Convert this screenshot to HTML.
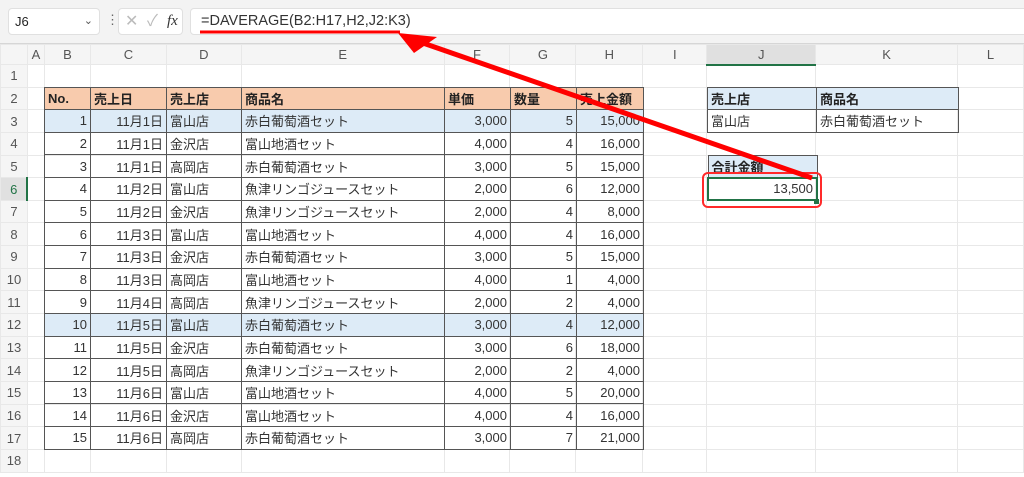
<!DOCTYPE html>
<html><head><meta charset="utf-8"><style>
*{box-sizing:border-box;margin:0;padding:0}
body{width:1024px;height:477px;overflow:hidden;background:#fff;font-family:"Liberation Sans","Noto Sans CJK JP",sans-serif;position:relative;color:#222}
.fb{position:absolute;left:0;top:0;width:1024px;height:44px;background:#f3f3f3;border-bottom:1px solid #d6d6d6}
.nb{position:absolute;left:8px;top:8px;width:92px;height:27px;background:#fff;border:1px solid #e0e0e0;border-radius:4px;font-size:13px;line-height:25px;padding-left:6px}
.ib{position:absolute;left:118px;top:8px;width:65px;height:27px;background:#fff;border:1px solid #e0e0e0;border-radius:4px;font-size:16px;color:#bbb;line-height:25px}
.fx{position:absolute;left:190px;top:8px;width:840px;height:27px;background:#fff;border:1px solid #e0e0e0;border-radius:4px;font-size:14.5px;line-height:25px;padding-left:10px;color:#333}
table{border-collapse:collapse;table-layout:fixed;position:absolute}
.g{left:0;top:44px}
.g td{border:1px solid #e8e8e8;height:22.65px;font-size:13px;color:#555}
.g tr.h td{height:20px;background:#f5f5f5;text-align:center;color:#555}
.g td.r{background:#f5f5f5;text-align:center;color:#555;font-size:13px}
.d td{border:1px solid #555;height:22.65px;font-size:13px;padding:0 3px;white-space:nowrap;overflow:hidden;color:#333}
.d td.n{text-align:right}
.d tr.hd td{background:#f8cbad;font-weight:bold;color:#222}
.d tr.hl td{background:#ddebf7}
.b td.bh{background:#ddebf7;font-weight:bold;color:#222}
</style></head><body>
<div class="fb">
<div class="nb">J6<span style="position:absolute;right:6px;top:0;color:#555;font-size:11px">&#8964;</span></div>
<div style="position:absolute;left:106px;top:12px;color:#666;font-size:13px">&#8942;</div>
<div class="ib"><span style="position:absolute;left:6px">&#10005;</span><span style="position:absolute;left:28px">&#10003;</span><span style="position:absolute;left:48px;color:#333;font-family:'Liberation Serif',serif;font-style:italic;font-size:15px">fx</span></div>
<div class="fx">=DAVERAGE(B2:H17,H2,J2:K3)</div>
</div>
<table class="g">
<colgroup><col style="width:27px"><col style="width:17px"><col style="width:46px"><col style="width:76px"><col style="width:75px"><col style="width:203px"><col style="width:66px"><col style="width:66px"><col style="width:67px"><col style="width:64px"><col style="width:109px"><col style="width:142px"><col style="width:66px"></colgroup>
<tr class="h"><td></td><td>A</td><td>B</td><td>C</td><td>D</td><td>E</td><td>F</td><td>G</td><td>H</td><td>I</td><td style="background:#e0e0e0;border-bottom:2px solid #217346">J</td><td>K</td><td>L</td></tr>
<tr><td class="r">1</td><td></td><td></td><td></td><td></td><td></td><td></td><td></td><td></td><td></td><td></td><td></td><td></td></tr>
<tr><td class="r">2</td><td></td><td></td><td></td><td></td><td></td><td></td><td></td><td></td><td></td><td></td><td></td><td></td></tr>
<tr><td class="r">3</td><td></td><td></td><td></td><td></td><td></td><td></td><td></td><td></td><td></td><td></td><td></td><td></td></tr>
<tr><td class="r">4</td><td></td><td></td><td></td><td></td><td></td><td></td><td></td><td></td><td></td><td></td><td></td><td></td></tr>
<tr><td class="r">5</td><td></td><td></td><td></td><td></td><td></td><td></td><td></td><td></td><td></td><td></td><td></td><td></td></tr>
<tr><td class="r" style="background:#e0e0e0;border-right:2px solid #217346;color:#217346">6</td><td></td><td></td><td></td><td></td><td></td><td></td><td></td><td></td><td></td><td></td><td></td><td></td></tr>
<tr><td class="r">7</td><td></td><td></td><td></td><td></td><td></td><td></td><td></td><td></td><td></td><td></td><td></td><td></td></tr>
<tr><td class="r">8</td><td></td><td></td><td></td><td></td><td></td><td></td><td></td><td></td><td></td><td></td><td></td><td></td></tr>
<tr><td class="r">9</td><td></td><td></td><td></td><td></td><td></td><td></td><td></td><td></td><td></td><td></td><td></td><td></td></tr>
<tr><td class="r">10</td><td></td><td></td><td></td><td></td><td></td><td></td><td></td><td></td><td></td><td></td><td></td><td></td></tr>
<tr><td class="r">11</td><td></td><td></td><td></td><td></td><td></td><td></td><td></td><td></td><td></td><td></td><td></td><td></td></tr>
<tr><td class="r">12</td><td></td><td></td><td></td><td></td><td></td><td></td><td></td><td></td><td></td><td></td><td></td><td></td></tr>
<tr><td class="r">13</td><td></td><td></td><td></td><td></td><td></td><td></td><td></td><td></td><td></td><td></td><td></td><td></td></tr>
<tr><td class="r">14</td><td></td><td></td><td></td><td></td><td></td><td></td><td></td><td></td><td></td><td></td><td></td><td></td></tr>
<tr><td class="r">15</td><td></td><td></td><td></td><td></td><td></td><td></td><td></td><td></td><td></td><td></td><td></td><td></td></tr>
<tr><td class="r">16</td><td></td><td></td><td></td><td></td><td></td><td></td><td></td><td></td><td></td><td></td><td></td><td></td></tr>
<tr><td class="r">17</td><td></td><td></td><td></td><td></td><td></td><td></td><td></td><td></td><td></td><td></td><td></td><td></td></tr>
<tr><td class="r">18</td><td></td><td></td><td></td><td></td><td></td><td></td><td></td><td></td><td></td><td></td><td></td><td></td></tr>
</table>

<table class="d" style="left:44px;top:86.5px">
<colgroup><col style="width:46px"><col style="width:76px"><col style="width:75px"><col style="width:203px"><col style="width:66px"><col style="width:66px"><col style="width:67px"></colgroup>
<tr class="hd"><td>No.</td><td>売上日</td><td>売上店</td><td>商品名</td><td>単価</td><td>数量</td><td>売上金額</td></tr>
<tr class="hl"><td class="n">1</td><td class="n">11月1日</td><td>富山店</td><td>赤白葡萄酒セット</td><td class="n">3,000</td><td class="n">5</td><td class="n">15,000</td></tr>
<tr><td class="n">2</td><td class="n">11月1日</td><td>金沢店</td><td>富山地酒セット</td><td class="n">4,000</td><td class="n">4</td><td class="n">16,000</td></tr>
<tr><td class="n">3</td><td class="n">11月1日</td><td>高岡店</td><td>赤白葡萄酒セット</td><td class="n">3,000</td><td class="n">5</td><td class="n">15,000</td></tr>
<tr><td class="n">4</td><td class="n">11月2日</td><td>富山店</td><td>魚津リンゴジュースセット</td><td class="n">2,000</td><td class="n">6</td><td class="n">12,000</td></tr>
<tr><td class="n">5</td><td class="n">11月2日</td><td>金沢店</td><td>魚津リンゴジュースセット</td><td class="n">2,000</td><td class="n">4</td><td class="n">8,000</td></tr>
<tr><td class="n">6</td><td class="n">11月3日</td><td>富山店</td><td>富山地酒セット</td><td class="n">4,000</td><td class="n">4</td><td class="n">16,000</td></tr>
<tr><td class="n">7</td><td class="n">11月3日</td><td>金沢店</td><td>赤白葡萄酒セット</td><td class="n">3,000</td><td class="n">5</td><td class="n">15,000</td></tr>
<tr><td class="n">8</td><td class="n">11月3日</td><td>高岡店</td><td>富山地酒セット</td><td class="n">4,000</td><td class="n">1</td><td class="n">4,000</td></tr>
<tr><td class="n">9</td><td class="n">11月4日</td><td>高岡店</td><td>魚津リンゴジュースセット</td><td class="n">2,000</td><td class="n">2</td><td class="n">4,000</td></tr>
<tr class="hl"><td class="n">10</td><td class="n">11月5日</td><td>富山店</td><td>赤白葡萄酒セット</td><td class="n">3,000</td><td class="n">4</td><td class="n">12,000</td></tr>
<tr><td class="n">11</td><td class="n">11月5日</td><td>金沢店</td><td>赤白葡萄酒セット</td><td class="n">3,000</td><td class="n">6</td><td class="n">18,000</td></tr>
<tr><td class="n">12</td><td class="n">11月5日</td><td>高岡店</td><td>魚津リンゴジュースセット</td><td class="n">2,000</td><td class="n">2</td><td class="n">4,000</td></tr>
<tr><td class="n">13</td><td class="n">11月6日</td><td>富山店</td><td>富山地酒セット</td><td class="n">4,000</td><td class="n">5</td><td class="n">20,000</td></tr>
<tr><td class="n">14</td><td class="n">11月6日</td><td>金沢店</td><td>富山地酒セット</td><td class="n">4,000</td><td class="n">4</td><td class="n">16,000</td></tr>
<tr><td class="n">15</td><td class="n">11月6日</td><td>高岡店</td><td>赤白葡萄酒セット</td><td class="n">3,000</td><td class="n">7</td><td class="n">21,000</td></tr>
</table>

<table class="d b" style="left:707px;top:86.5px">
<colgroup><col style="width:109px"><col style="width:142px"></colgroup>
<tr><td class="bh">売上店</td><td class="bh">商品名</td></tr>
<tr><td>富山店</td><td>赤白葡萄酒セット</td></tr>
</table>
<table class="d b" style="left:707px;top:154.5px">
<colgroup><col style="width:109px"></colgroup>
<tr><td class="bh">合計金額</td></tr>
<tr><td class="n" style="border:2px solid #217346">13,500</td></tr>
</table>
<div style="position:absolute;left:814px;top:199px;width:5px;height:5px;background:#217346"></div>

<svg style="position:absolute;left:0;top:0" width="1024" height="477">
<rect x="703" y="173" width="118" height="34" rx="5" fill="none" stroke="#ff2a2a" stroke-width="2"/>
<line x1="200" y1="32" x2="400" y2="32" stroke="#ff0000" stroke-width="3"/>
<line x1="812" y1="178" x2="420" y2="42" stroke="#ff0000" stroke-width="5"/>
<polygon points="398,33 437,37 414,53" fill="#ff0000"/>
</svg>
</body></html>
